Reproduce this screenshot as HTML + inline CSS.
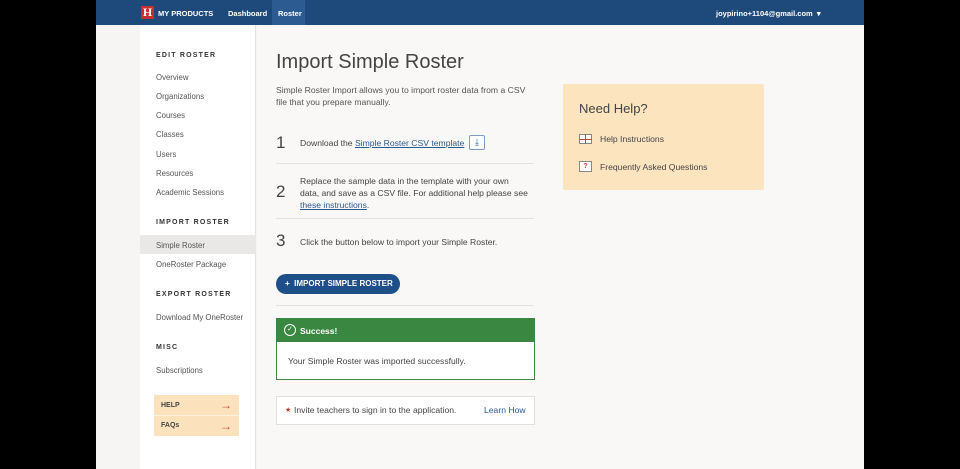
<!DOCTYPE html>
<html><head><meta charset="utf-8"><style>
*{margin:0;padding:0;box-sizing:border-box}
body{width:960px;height:469px;background:#000;font-family:"Liberation Sans",sans-serif;position:relative;overflow:hidden}
.a{position:absolute;white-space:nowrap}
#page{left:96px;top:0;width:768px;height:469px;background:#f6f5f4}
#nav{left:96px;top:0;width:768px;height:25px;background:#1e4a7b;color:#fff;font-size:7.5px;font-weight:bold}
#side{left:140px;top:25px;width:116px;height:444px;background:#fff;border-right:1px solid #e6e4e2}
#main{left:257px;top:25px;width:607px;height:444px;background:#f9f8f7}
.h{font-size:7px;font-weight:bold;letter-spacing:1.2px;color:#333}
.l{font-size:7.8px;color:#555}
.t{font-size:8.6px;color:#444}
.num{font-size:17px;color:#444}
.hr{height:1px;background:#e4e2e0;width:258px;left:276px}
u{color:#2a5a92}
</style></head><body>
<div class="a" id="page"></div>
<div class="a" id="nav">
 <div class="a" style="left:45px;top:6px;width:13px;height:13px;background:#c8302c;color:#fff;font:bold 12px 'Liberation Serif',serif;text-align:center;line-height:13px">H</div>
 <div class="a" style="left:62px;top:9px">MY PRODUCTS</div>
 <div class="a" style="left:132px;top:9px">Dashboard</div>
 <div class="a" style="left:176px;top:0;width:33px;height:25px;background:#2c5b92"></div>
 <div class="a" style="left:182px;top:9px">Roster</div>
 <div class="a" style="left:620px;top:9px">joypirino+1104@gmail.com &nbsp;▾</div>
</div>
<div class="a" id="side"></div>
<div class="a" id="main"></div>
<div class="a h" style="left:156px;top:52px">EDIT ROSTER</div>
<div class="a l" style="left:156px;top:73px">Overview</div>
<div class="a l" style="left:156px;top:92px">Organizations</div>
<div class="a l" style="left:156px;top:111px">Courses</div>
<div class="a l" style="left:156px;top:130px">Classes</div>
<div class="a l" style="left:156px;top:150px">Users</div>
<div class="a l" style="left:156px;top:169px">Resources</div>
<div class="a l" style="left:156px;top:188px">Academic Sessions</div>
<div class="a h" style="left:156px;top:219px">IMPORT ROSTER</div>
<div class="a" style="left:140px;top:235px;width:116px;height:19px;background:#e9e8e7"></div>
<div class="a l" style="left:156px;top:241px">Simple Roster</div>
<div class="a l" style="left:156px;top:260px">OneRoster Package</div>
<div class="a h" style="left:156px;top:291px">EXPORT ROSTER</div>
<div class="a l" style="left:156px;top:313px">Download My OneRoster</div>
<div class="a h" style="left:156px;top:344px">MISC</div>
<div class="a l" style="left:156px;top:366px">Subscriptions</div>
<div class="a" style="left:154px;top:395px;width:85px;height:41px;background:#fbe2bd"></div>
<div class="a" style="left:154px;top:415px;width:85px;height:1px;background:#fff3e0"></div>
<div class="a" style="left:161px;top:402px;font-size:7px;font-weight:bold;color:#444">HELP</div>
<div class="a" style="left:161px;top:422px;font-size:7px;font-weight:bold;color:#444">FAQs</div>
<div class="a" style="left:220px;top:398px;font-size:12px;color:#c0473b">→</div>
<div class="a" style="left:220px;top:419px;font-size:12px;color:#c0473b">→</div>

<div class="a" style="left:276px;top:51px;font-size:20px;color:#444">Import Simple Roster</div>
<div class="a t" style="left:276px;top:84px;line-height:12px;color:#555">Simple Roster Import allows you to import roster data from a CSV<br>file that you prepare manually.</div>
<div class="a num" style="left:276px;top:133px">1</div>
<div class="a t" style="left:300px;top:138px">Download the <u>Simple Roster CSV template </u></div>
<div class="a" style="left:469px;top:135px;width:16px;height:15px;border:1px solid #7d9cc0;border-radius:2px;background:#fff;color:#2a5a92;font-size:9px;text-align:center;line-height:13px">⤓</div>
<div class="a hr" style="top:163px"></div>
<div class="a num" style="left:276px;top:182px">2</div>
<div class="a t" style="left:300px;top:175px;line-height:12px">Replace the sample data in the template with your own<br>data, and save as a CSV file. For additional help please see<br><u>these instructions</u>.</div>
<div class="a hr" style="top:218px"></div>
<div class="a num" style="left:276px;top:231px">3</div>
<div class="a t" style="left:300px;top:237px">Click the button below to import your Simple Roster.</div>
<div class="a" style="left:276px;top:274px;width:124px;height:20px;border-radius:10px;background:#1f4f88;color:#fff;font-size:8px;font-weight:bold;line-height:20px;padding-left:9px">+&nbsp; IMPORT SIMPLE ROSTER</div>
<div class="a hr" style="top:305px"></div>
<div class="a" style="left:276px;top:318px;width:259px;height:62px;border:1px solid #3f8a46;background:#fff"></div>
<div class="a" style="left:276px;top:318px;width:259px;height:24px;background:#3a8741"></div>
<div class="a" style="left:284px;top:324px;width:12px;height:12px;border:1px solid #fff;border-radius:50%;color:#fff;font-size:7px;text-align:center;line-height:10px">✓</div>
<div class="a" style="left:300px;top:326px;color:#fff;font-size:8.5px;font-weight:bold">Success!</div>
<div class="a t" style="left:288px;top:356px">Your Simple Roster was imported successfully.</div>
<div class="a" style="left:276px;top:396px;width:259px;height:29px;border:1px solid #e2e0de;background:#fff"></div>
<div class="a" style="left:285px;top:406px;color:#c0392b;font-size:7px">★</div>
<div class="a t" style="left:294px;top:405px">Invite teachers to sign in to the application.</div>
<div class="a" style="left:484px;top:405px;font-size:8.6px;color:#2a5a92">Learn How</div>

<div class="a" style="left:563px;top:84px;width:201px;height:106px;background:#fce4bf;border-radius:2px"></div>
<div class="a" style="left:579px;top:101px;font-size:13px;color:#444">Need Help?</div>
<div class="a" style="left:579px;top:134px;width:13px;height:10px;border:1px solid #888;background:#fff"></div>
<div class="a" style="left:585px;top:134px;width:1px;height:10px;background:#c0473b"></div>
<div class="a" style="left:579px;top:139px;width:13px;height:1px;background:#c0473b"></div>
<div class="a" style="left:600px;top:134px;font-size:8.6px;color:#444">Help Instructions</div>
<div class="a" style="left:579px;top:161px;width:13px;height:11px;border:1px solid #888;background:#fff;color:#c0473b;font-size:7px;text-align:center;line-height:9px;font-weight:bold">?</div>
<div class="a" style="left:600px;top:162px;font-size:8.6px;color:#444">Frequently Asked Questions</div>
</body></html>
